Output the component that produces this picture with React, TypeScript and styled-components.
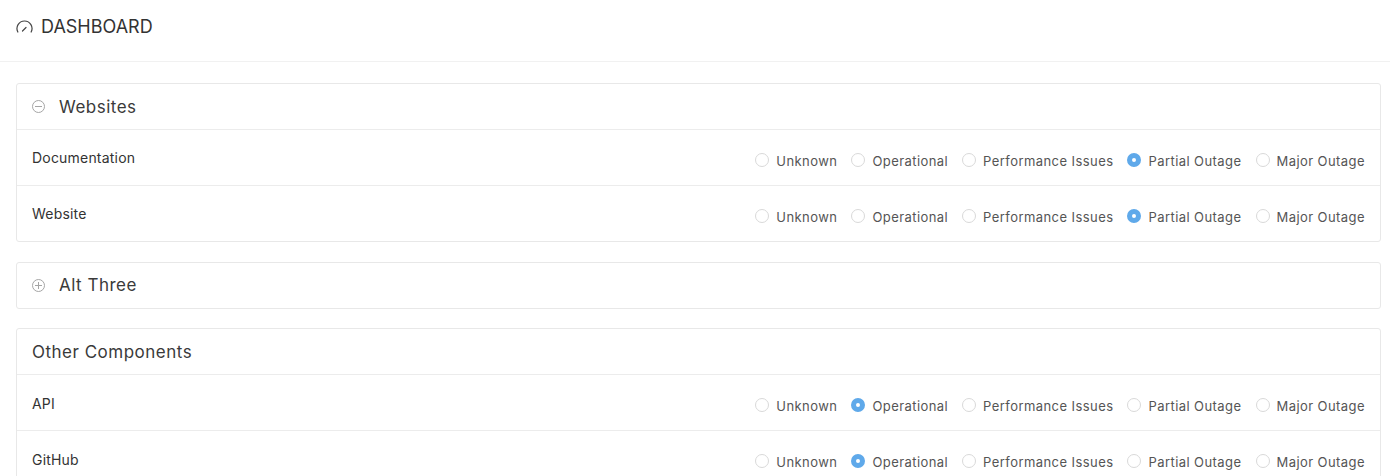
import React from "react";
import styled, { createGlobalStyle } from "styled-components";

const GlobalStyle = createGlobalStyle`
    html, body {
        margin: 0;
        padding: 0;
        height: 476px;
        overflow: hidden;
        background: #fff;
    }
    body {
        font-family: Inter, "Liberation Sans", sans-serif;
        color: #333;
    }
`;

const Header = styled.div`
    height: 53px;
    border-bottom: 1px solid #f1f1f1;
    display: flex;
    align-items: center;
    padding: 0 16px 8px;
    gap: 8px;
`;
const HeaderTitle = styled.span`
    font-size: 18px;
    color: #333;
`;
const Content = styled.div`
    padding: 21px 9px 0 16px;
    display: flex;
    flex-direction: column;
    gap: 19.7px;
`;
const Panel = styled.div`
    border: 1px solid #e8e8e8;
    border-radius: 3px;
    background: #fff;
`;
const PanelHeading = styled.div`
    height: 45px;
    box-sizing: border-box;
    display: flex;
    align-items: center;
    gap: 14px;
    padding: 0.5px 15px 0;
    font-size: 17px;
    letter-spacing: 0.5px;
    color: #3a3a3a;
`;
const Row = styled.div`
    height: 55px;
    border-top: 1px solid #ececec;
    display: flex;
    justify-content: space-between;
    padding: 0 15px;
`;
const RowName = styled.span`
    font-size: 14px;
    letter-spacing: 0.2px;
    line-height: 16px;
    margin-top: 20.3px;
    color: #333;
`;
const Options = styled.div`
    display: flex;
    gap: 14px;
    padding-top: 23px;
`;
const Option = styled.label`
    display: flex;
    gap: 7px;
    font-size: 13px;
    letter-spacing: 0.43px;
    line-height: 16px;
    color: #555;
`;
const Radio = styled.span<{ $checked: boolean }>`
    width: 14px;
    height: 14px;
    box-sizing: border-box;
    border-radius: 50%;
    border: ${(p) => (p.$checked ? "5px solid #5fa9ea" : "1px solid #d9d9d9")};
    background: #fff;
`;

const STATUSES = ["Unknown", "Operational", "Performance Issues", "Partial Outage", "Major Outage"];

const GaugeIcon = () => (
    <svg width="17" height="17" viewBox="0 0 17 17" fill="none" stroke="#444" strokeWidth="1.2" strokeLinecap="round">
        <path d="M1.87 14A7.5 7.5 0 1 1 15.13 14" />
        <path d="M6.5 13L10 9.5" />
    </svg>
);

const ToggleIcon = ({ open }: { open: boolean }) => (
    <svg width="13" height="13" viewBox="0 0 13 13" fill="none" stroke="#a5a5a5" strokeWidth="1">
        <circle cx="6.5" cy="6.5" r="6" />
        <path d="M3 6.5H10" />
        {!open && <path d="M6.5 3V10" />}
    </svg>
);

const ComponentRow = ({ name, status }: { name: string; status: string }) => (
    <Row>
        <RowName>{name}</RowName>
        <Options>
            {STATUSES.map((s) => (
                <Option key={s}>
                    <Radio $checked={s === status} />
                    {s}
                </Option>
            ))}
        </Options>
    </Row>
);

export default function App() {
    return (
        <>
            <GlobalStyle />
            <Header>
                <GaugeIcon />
                <HeaderTitle>DASHBOARD</HeaderTitle>
            </Header>
            <Content>
                <Panel>
                    <PanelHeading>
                        <ToggleIcon open />
                        Websites
                    </PanelHeading>
                    <ComponentRow name="Documentation" status="Partial Outage" />
                    <ComponentRow name="Website" status="Partial Outage" />
                </Panel>
                <Panel>
                    <PanelHeading>
                        <ToggleIcon open={false} />
                        Alt Three
                    </PanelHeading>
                </Panel>
                <Panel>
                    <PanelHeading>Other Components</PanelHeading>
                    <ComponentRow name="API" status="Operational" />
                    <ComponentRow name="GitHub" status="Operational" />
                </Panel>
            </Content>
        </>
    );
}
